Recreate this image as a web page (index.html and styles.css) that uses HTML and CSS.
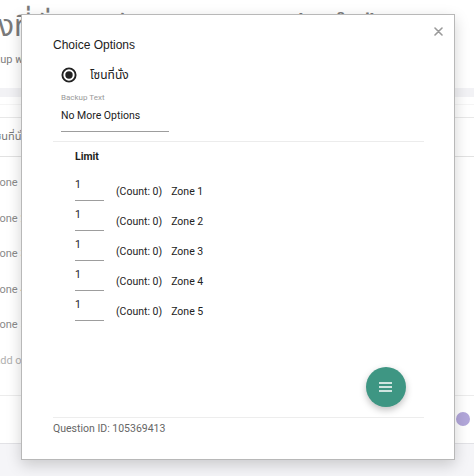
FILE: index.html
```html
<!DOCTYPE html>
<html lang="th">
<head>
<meta charset="utf-8">
<title>Choice Options</title>
<link rel="stylesheet" href="styles.css">
</head>
<body>
<div class="page">
  <div class="bg">
    <h1 class="bg-title">งที่นั่งงานสัมมนาวิชาการประจำปี</h1>
    <p class="bg-sub"><span class="shift-sub">Backup ฟอร์มลงทะเบียน</span></p>
    <div class="bg-band"></div>
    <div class="bg-faint"></div>
    <div class="bg-line"></div>
    <div class="bg-heading"><span class="shift-head">โซนที่นั่ง</span></div>
    <div class="bg-rows">
      <div class="bg-row"><span class="shift-z">Zone 1</span></div>
      <div class="bg-row"><span class="shift-z">Zone 2</span></div>
      <div class="bg-row"><span class="shift-z">Zone 3</span></div>
      <div class="bg-row"><span class="shift-z">Zone 4</span></div>
      <div class="bg-row"><span class="shift-z">Zone 5</span></div>
      <div class="bg-row light"><span class="shift-a">Add option</span></div>
    </div>
    <div class="bg-actions"><span class="avatar"></span></div>
    <div class="bg-foot"></div>
  </div>

  <div class="dialog" role="dialog">
    <button class="close" aria-label="Close">
      <svg width="9" height="9" viewBox="0 0 9 9"><path d="M1 1L8 8M8 1L1 8" stroke="#9a9a9a" stroke-width="1.6" stroke-linecap="round"/></svg>
    </button>
    <div class="dlg-body">
      <h2 class="dlg-title">Choice Options</h2>
      <div class="choice">
        <svg class="radio" width="16" height="16" viewBox="0 0 16 16"><circle cx="8" cy="8" r="6.6" fill="none" stroke="#222" stroke-width="1.9"/><circle cx="8" cy="8" r="3.7" fill="#222"/></svg>
        <span class="choice-label">โซนที่นั่ง</span>
      </div>
      <div class="field">
        <div class="field-label">Backup Text</div>
        <div class="field-input">No More Options</div>
      </div>
      <div class="sep"></div>
      <div class="limits">
        <div class="limits-head">Limit</div>
        <div class="limit-row"><div class="limit-input">1</div><span class="count">(Count: 0)</span><span class="zone">Zone 1</span></div>
        <div class="limit-row"><div class="limit-input">1</div><span class="count">(Count: 0)</span><span class="zone">Zone 2</span></div>
        <div class="limit-row"><div class="limit-input">1</div><span class="count">(Count: 0)</span><span class="zone">Zone 3</span></div>
        <div class="limit-row"><div class="limit-input">1</div><span class="count">(Count: 0)</span><span class="zone">Zone 4</span></div>
        <div class="limit-row"><div class="limit-input">1</div><span class="count">(Count: 0)</span><span class="zone">Zone 5</span></div>
      </div>
    </div>
    <div class="dlg-foot">Question ID: 105369413</div>
    <button class="fab" aria-label="Menu">
      <svg width="40" height="40" viewBox="0 0 40 40"><path d="M13 16H26M13 20H26M13 24H26" stroke="#fff" stroke-width="1.7"/></svg>
    </button>
  </div>
</div>
</body>
</html>
```
FILE: styles.css
```css
html, body {
  margin: 0;
  padding: 0;
  background: #fff;
}
body {
  width: 474px;
  height: 476px;
  overflow: hidden;
  font-family: Roboto, "Noto Sans Thai", "Loma", "Garuda", "DejaVu Sans", sans-serif;
}
.page {
  position: relative;
  width: 474px;
  height: 476px;
  overflow: hidden;
}

/* background page */
.bg {
  display: flex;
  flex-direction: column;
  height: 476px;
}
.bg-title {
  margin: 6px 0 0 -2px;
  height: 40px;
  line-height: 40px;
  font-size: 30px;
  font-weight: 400;
  color: #7a7a7a;
  white-space: nowrap;
}
.bg-sub {
  margin: 6px 0 0 0;
  height: 16px;
  line-height: 16px;
  font-size: 11px;
  color: #808080;
  white-space: nowrap;
}
.shift-sub { margin-left: -24px; }
.bg-band {
  margin-top: 20px;
  height: 9px;
  background: #f2f2f5;
}
.bg-faint {
  margin-top: 7px;
  height: 1px;
  background: #f5f5f5;
}
.bg-line {
  margin-top: 12px;
  height: 1px;
  background: #e8e8e8;
}
.bg-heading {
  height: 38px;
  line-height: 38px;
  font-size: 11px;
  color: #777;
  border-bottom: 1px solid #e2e2e2;
  white-space: nowrap;
}
.shift-head { margin-left: -8px; }
.bg-rows {
  height: 238px;
  box-sizing: border-box;
  padding-top: 8px;
}
.bg-row {
  height: 35.5px;
  line-height: 35.5px;
  font-size: 11px;
  color: #8a8a8a;
  white-space: nowrap;
}
.bg-row.light { color: #b0b0b0; }
.shift-z { margin-left: -7px; }
.shift-a { margin-left: -7px; }
.bg-actions {
  height: 49px;
  border-top: 1px solid #ececec;
  border-bottom: 1px solid #e2e2e6;
  box-sizing: border-box;
  display: flex;
  justify-content: flex-end;
  align-items: center;
  padding-right: 4px;
}
.avatar {
  width: 14px;
  height: 14px;
  border-radius: 50%;
  background: #b2a7da;
  margin-bottom: 2px;
}
.bg-foot {
  flex: 1;
  background: #f5f5f8;
}

/* dialog */
.dialog {
  position: absolute;
  left: 21px;
  top: 14px;
  width: 434px;
  height: 446px;
  box-sizing: border-box;
  background: #fff;
  border: 1px solid #b8b8b8;
  box-shadow: 0 5px 14px rgba(0, 0, 0, 0.18);
  padding: 22px 30px 23px 31px;
  display: flex;
  flex-direction: column;
}
.close {
  position: absolute;
  left: 412px;
  top: 12px;
  width: 9px;
  height: 9px;
  padding: 0;
  border: 0;
  background: none;
  display: block;
}
.close svg { display: block; }
.dlg-body { flex: 1; }
.dlg-title {
  margin: 0;
  font-family: "Liberation Sans", Arial, sans-serif;
  font-weight: 400;
  font-size: 12px;
  line-height: 16px;
  color: #1c1c1c;
}
.choice {
  margin-top: 12px;
  height: 20px;
  display: flex;
  align-items: center;
  padding-left: 8px;
}
.radio { display: block; flex: none; }
.choice-label {
  margin-left: 13px;
  font-family: "Noto Sans Thai", "Loma", "Garuda", "Noto Sans", sans-serif;
  font-size: 12px;
  line-height: 20px;
  color: #222;
}
.field { padding-left: 8px; }
.field-label {
  margin-top: 8px;
  font-size: 8px;
  line-height: 10px;
  color: #9a9a9a;
}
.field-input {
  margin-top: 6px;
  width: 108px;
  font-size: 10.5px;
  line-height: 14px;
  color: #222;
  padding-bottom: 8px;
  border-bottom: 1px solid #9d9d9d;
}
.sep {
  margin-top: 9px;
  height: 1px;
  background: #ececec;
}
.limits { padding-left: 22px; }
.limits-head {
  margin-top: 8px;
  font-size: 10.5px;
  line-height: 14px;
  font-weight: 700;
  color: #1c1c1c;
}
.limit-row {
  display: flex;
  align-items: flex-start;
  margin-top: 7px;
  font-size: 10.5px;
  line-height: 14px;
  color: #222;
}
.limits-head + .limit-row { margin-top: 14px; }
.limit-input {
  width: 29px;
  padding-bottom: 8px;
  border-bottom: 1px solid #9d9d9d;
}
.count {
  margin-top: 7px;
  margin-left: 12px;
}
.zone {
  margin-top: 7px;
  margin-left: 9px;
}
.dlg-foot {
  border-top: 1px solid #ededed;
  padding-top: 4px;
  font-size: 10.5px;
  line-height: 14px;
  color: #666;
}
.fab {
  position: absolute;
  left: 344px;
  top: 352px;
  width: 40px;
  height: 40px;
  padding: 0;
  border: 0;
  border-radius: 50%;
  background: #3e9683;
  box-shadow: 0 3px 7px rgba(0, 0, 0, 0.25);
}
.fab svg { display: block; }
```
